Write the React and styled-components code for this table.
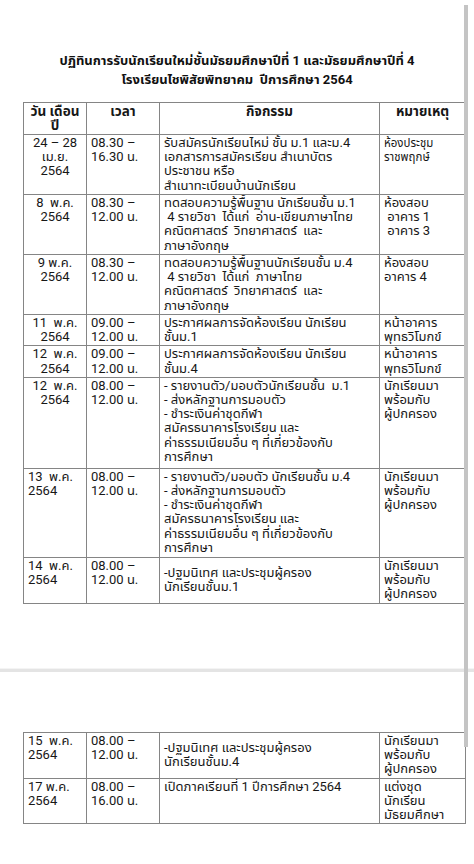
import styled, { createGlobalStyle } from "styled-components";

const Global = createGlobalStyle`
  html, body {
    margin: 0;
    padding: 0;
    background: #ffffff;
  }
  body {
    font-family: Roboto, "Noto Sans Thai", "Noto Sans", sans-serif;
    color: #171717;
  }
`;

const Viewer = styled.div`
  position: relative;
  width: 474px;
  min-height: 864px;
  background: #fff;
`;

const Page = styled.div`
  background: #fff;
  height: ${(p) => p.$height}px;
  padding-top: ${(p) => p.$top}px;
  box-sizing: border-box;
`;

const PageGap = styled.div`
  height: 4px;
  border-top: 1px solid #f4f4f4;
  border-bottom: 3px solid #e4e4e4;
  box-sizing: border-box;
`;

const Scroll = styled.div`
  position: absolute;
  top: 5px;
  left: 464px;
  width: 4px;
  height: 742px;
  background: #c4c4c4;
`;

const Title = styled.h1`
  margin: 0 0 13px;
  text-align: center;
  font-size: 13px;
  line-height: 19px;
  font-weight: 700;
  color: #111;
  white-space: pre-wrap;
`;

const Table = styled.table`
  margin-left: 23px;
  width: 442px;
  border-collapse: collapse;
  table-layout: fixed;
  font-size: 13px;
  line-height: 14.2px;
`;

const Cell = styled.td`
  border: 1px solid #858585;
  padding: 1px 4px 1px;
  vertical-align: ${(p) => (p.$middle ? "middle" : "top")};
  text-align: ${(p) => (p.$center ? "center" : "left")};
  font-size: ${(p) => (p.$small ? "11.5px" : "13px")};
  white-space: pre-wrap;
  overflow: hidden;
`;

const Head = styled.th`
  border: 1px solid #858585;
  padding: 1px 4px 2px;
  font-size: 13.5px;
  line-height: 14px;
  font-weight: 700;
  text-align: center;
  vertical-align: top;
`;

const cols = [63, 73, 220, 86];

function Row({ r }) {
  return (
    <tr style={{ height: r.h }}>
      <Cell $center={r.center}>{r.date}</Cell>
      <Cell>{r.time}</Cell>
      <Cell $middle={r.mid}>{r.act}</Cell>
      <Cell $small={r.small}>{r.note}</Cell>
    </tr>
  );
}

const page1 = [
  {
    h: 60, center: true, small: true,
    date: "24 – 28\nเม.ย.\n2564",
    time: "08.30 –\n16.30 น.",
    act: "รับสมัครนักเรียนไหม่ ชั้น ม.1 และม.4\nเอกสารการสมัครเรียน สำเนาบัตร\nประชาชน หรือ\nสำเนาทะเบียนบ้านนักเรียน",
    note: "ห้องประชุม\nราชพฤกษ์",
  },
  {
    h: 60, center: true,
    date: "8  พ.ค.\n2564",
    time: "08.30 –\n12.00 น.",
    act: "ทดสอบความรู้พื้นฐาน นักเรียนชั้น ม.1\n 4 รายวิชา  ได้แก่  อ่าน-เขียนภาษาไทย\nคณิตศาสตร์  วิทยาศาสตร์  และ\nภาษาอังกฤษ",
    note: "ห้องสอบ\n อาคาร 1\n อาคาร 3",
  },
  {
    h: 60, center: true,
    date: "9 พ.ค.\n2564",
    time: "08.30 –\n12.00 น.",
    act: "ทดสอบความรู้พื้นฐานนักเรียนชั้น ม.4\n 4 รายวิชา  ได้แก่  ภาษาไทย\nคณิตศาสตร์  วิทยาศาสตร์  และ\nภาษาอังกฤษ",
    note: "ห้องสอบ\nอาคาร 4",
  },
  {
    h: 31, center: true,
    date: "11  พ.ค.\n2564",
    time: "09.00 –\n12.00 น.",
    act: "ประกาศผลการจัดห้องเรียน นักเรียน\nชั้นม.1",
    note: "หน้าอาคาร\nพุทธวิโมกข์",
  },
  {
    h: 29, center: true,
    date: "12  พ.ค.\n2564",
    time: "09.00 –\n12.00 น.",
    act: "ประกาศผลการจัดห้องเรียน นักเรียน\nชั้นม.4",
    note: "หน้าอาคาร\nพุทธวิโมกข์",
  },
  {
    h: 91, center: true,
    date: "12  พ.ค.\n2564",
    time: "08.00 –\n12.00 น.",
    act: "- รายงานตัว/มอบตัวนักเรียนชั้น  ม.1\n- ส่งหลักฐานการมอบตัว\n- ชำระเงินค่าชุดกีฬา\nสมัครธนาคารโรงเรียน และ\nค่าธรรมเนียมอื่น ๆ ที่เกี่ยวข้องกับ\nการศึกษา",
    note: "นักเรียนมา\nพร้อมกับ\nผู้ปกครอง",
  },
  {
    h: 89,
    date: "13  พ.ค.\n2564",
    time: "08.00 –\n12.00 น.",
    act: "- รายงานตัว/มอบตัว นักเรียนชั้น ม.4\n- ส่งหลักฐานการมอบตัว\n- ชำระเงินค่าชุดกีฬา\nสมัครธนาคารโรงเรียน และ\nค่าธรรมเนียมอื่น ๆ ที่เกี่ยวข้องกับ\nการศึกษา",
    note: "นักเรียนมา\nพร้อมกับ\nผู้ปกครอง",
  },
  {
    h: 46, mid: true,
    date: "14  พ.ค.\n2564",
    time: "08.00 –\n12.00 น.",
    act: "-ปฐมนิเทศ และประชุมผู้ครอง\nนักเรียนชั้นม.1",
    note: "นักเรียนมา\nพร้อมกับ\nผู้ปกครอง",
  },
];

const page2 = [
  {
    h: 45, mid: true,
    date: "15  พ.ค.\n2564",
    time: "08.00 –\n12.00 น.",
    act: "-ปฐมนิเทศ และประชุมผู้ครอง\nนักเรียนชั้นม.4",
    note: "นักเรียนมา\nพร้อมกับ\nผู้ปกครอง",
  },
  {
    h: 45,
    date: "17 พ.ค.\n2564",
    time: "08.00 –\n16.00 น.",
    act: "เปิดภาคเรียนที่ 1 ปีการศึกษา 2564",
    note: "แต่งชุด\nนักเรียน\nมัธยมศึกษา",
  },
];

const heading =
  "ปฏิทินการรับนักเรียนใหม่ชั้นมัธยมศึกษาปีที่ 1 และมัธยมศึกษาปีที่ 4\nโรงเรียนไชพิสัยพิทยาคม  ปีการศึกษา 2564";

function ColGroup() {
  return (
    <colgroup>
      {cols.map((w, i) => (
        <col key={i} style={{ width: w }} />
      ))}
    </colgroup>
  );
}

export default function App() {
  return (
    <Viewer>
      <Global />
      <Page $height={668} $top={51}>
        <Title>{heading}</Title>
        <Table>
          <ColGroup />
          <thead>
            <tr>
              <Head>วัน เดือน ปี</Head>
              <Head>เวลา</Head>
              <Head>กิจกรรม</Head>
              <Head>หมายเหตุ</Head>
            </tr>
          </thead>
          <tbody>
            {page1.map((r, i) => (
              <Row key={i} r={r} />
            ))}
          </tbody>
        </Table>
      </Page>
      <PageGap />
      <Page $height={192} $top={60}>
        <Table>
          <ColGroup />
          <tbody>
            {page2.map((r, i) => (
              <Row key={i} r={r} />
            ))}
          </tbody>
        </Table>
      </Page>
      <Scroll />
    </Viewer>
  );
}
